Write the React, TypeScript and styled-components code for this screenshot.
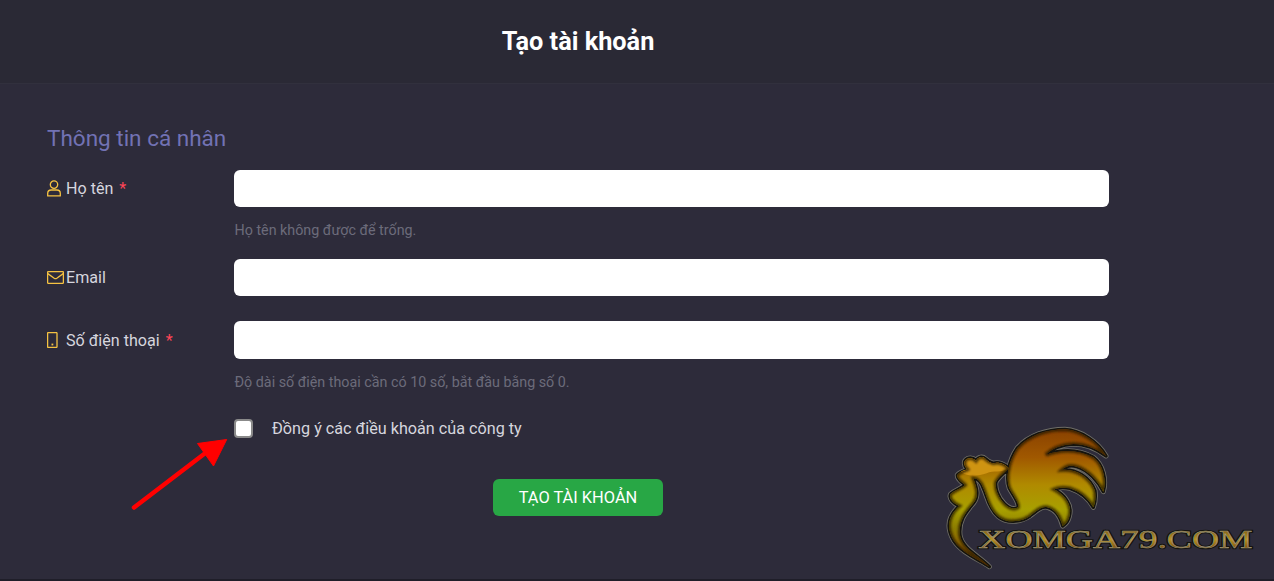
import React from "react";
import styled, { createGlobalStyle } from "styled-components";

const Global = createGlobalStyle`
  html, body { margin: 0; padding: 0; background: #2d2b3a; }
  body { font-family: Roboto, "Liberation Sans", sans-serif; }
  * { box-sizing: border-box; }
`;

const Page = styled.div`
  position: relative;
  width: 1274px;
  height: 581px;
  overflow: hidden;
  background: #2d2b3a;
  border-bottom: 2px solid #1f1e29;
`;

const Header = styled.header`
  height: 84px;
  display: flex;
  align-items: center;
  justify-content: center;
  background: #2a2935;
  border-bottom: 1px solid #31303d;
  padding-right: 118px;
`;

const Title = styled.h1`
  margin: 0;
  font-size: 25.3px;
  font-weight: 700;
  line-height: 28px;
  color: #fff;
`;

const Form = styled.form`
  width: 1156px;
  padding: 39px 47px 0;
`;

const Section = styled.h2`
  margin: 0 0 17px;
  font-size: 22.5px;
  font-weight: 400;
  line-height: 30px;
  color: #7272b4;
`;

const Row = styled.div<{ $gap: number }>`
  display: grid;
  grid-template-columns: 187px 875px;
  margin-bottom: ${(p) => p.$gap}px;
`;

const Label = styled.label<{ $h?: number }>`
  display: flex;
  align-items: center;
  height: ${(p) => p.$h ?? 37}px;
  font-size: 16.1px;
  color: #d6d6de;
`;

const IconSlot = styled.span`
  width: 19px;
  display: flex;
  align-items: center;
  color: #f5c242;
`;

const Star = styled.span`
  color: #ff4557;
  margin-left: 6px;
`;

const Input = styled.input<{ $h?: number }>`
  width: 100%;
  height: ${(p) => p.$h ?? 37}px;
  border: none;
  border-radius: 6px;
  background: #fff;
  display: block;
`;

const Hint = styled.div`
  grid-column: 2;
  margin-top: 14px;
  padding-left: 0.5px;
  font-size: 14.3px;
  line-height: 18px;
  color: #6c6b7a;
`;

const CheckRow = styled.div`
  display: flex;
  align-items: center;
  margin-left: 187px;
  height: 20px;
`;

const Box = styled.span`
  width: 19px;
  height: 19px;
  border: 2px solid #8a8a8a;
  border-radius: 4px;
  background: #fff;
`;

const CheckText = styled.span`
  margin-left: 19px;
  font-size: 16.2px;
  color: #d6d6de;
`;

const Actions = styled.div`
  display: flex;
  justify-content: center;
  margin-top: 41px;
  margin-left: -47px;
  margin-right: -47px;
`;

const Submit = styled.button`
  width: 170px;
  height: 37px;
  border: none;
  border-radius: 6px;
  background: #28a745;
  color: #fff;
  font-family: inherit;
  font-size: 16.4px;
  font-weight: 400;
`;

const Arrow = styled.svg`
  position: absolute;
  left: 125px;
  top: 430px;
`;

const Logo = styled.svg`
  position: absolute;
  left: 930px;
  top: 420px;
`;

const LogoText = styled.text`
  font-family: "Liberation Serif", serif;
  font-size: 78px;
  font-weight: 400;
`;

const rooster =
  "M178 440 C150 420 95 400 70 360 C50 325 52 290 88 258 C70 250 55 235 62 222 C75 210 95 205 105 195 C95 185 80 178 82 165 C90 155 105 152 112 148 C100 135 100 122 112 116 C122 112 132 116 138 122 C145 110 158 108 166 116 C172 122 176 126 190 130 C205 125 225 132 236 145 C222 160 205 172 198 186 C194 205 205 232 222 250 C235 264 250 270 264 262 C268 248 250 228 238 205 C226 172 236 122 262 84 C296 46 350 28 405 28 C450 30 505 65 528 108 C505 90 470 72 430 72 C395 74 368 84 348 104 C400 86 450 90 490 112 C520 134 530 180 520 215 C505 185 475 150 440 140 C420 134 405 140 395 150 C440 146 480 172 495 212 C498 235 495 250 490 262 C475 235 450 215 420 205 C405 202 385 202 372 208 C405 225 428 255 418 290 C415 302 408 312 398 318 C392 295 378 268 352 262 C335 258 320 272 300 288 C270 308 230 310 205 290 C175 265 170 225 160 205 C155 190 145 175 130 175 C138 200 150 225 130 250 C110 275 85 300 90 345 C95 385 150 410 178 440 Z";

const UserIcon = () => (
  <svg width="15" height="17" viewBox="0 0 15 17" fill="none" stroke="currentColor" strokeWidth="1.3">
    <circle cx="7" cy="4.6" r="3.7" />
    <path d="M0.7 15.9 V13.4 a3.4 3.4 0 0 1 3.4-3.4 h5.8 a3.4 3.4 0 0 1 3.4 3.4 V15.9 Z" strokeLinejoin="round" />
  </svg>
);

const MailIcon = () => (
  <svg width="17" height="13" viewBox="0 0 17 13" fill="none" stroke="currentColor" strokeWidth="1.3">
    <rect x="0.6" y="0.6" width="15.8" height="11.8" rx="0.8" />
    <path d="M0.8 2.6 L7.2 7.2 Q8.5 8 9.8 7.2 L16.2 2.6" />
  </svg>
);

const PhoneIcon = () => (
  <svg width="11" height="16" viewBox="0 0 11 16" fill="none" stroke="currentColor" strokeWidth="1.3">
    <rect x="0.6" y="0.6" width="9.4" height="14.8" rx="0.6" />
    <rect x="4.5" y="11.6" width="1.8" height="1.8" fill="currentColor" stroke="none" />
  </svg>
);

export default function App() {
  return (
    <Page>
      <Global />
      <Header>
        <Title>Tạo tài khoản</Title>
      </Header>
      <Form onSubmit={(e) => e.preventDefault()}>
        <Section>Thông tin cá nhân</Section>
        <Row $gap={20}>
          <Label>
            <IconSlot><UserIcon /></IconSlot>
            Họ tên <Star>*</Star>
          </Label>
          <Input />
          <Hint>Họ tên không được để trống.</Hint>
        </Row>
        <Row $gap={25}>
          <Label>
            <IconSlot><MailIcon /></IconSlot>
            Email
          </Label>
          <Input />
        </Row>
        <Row $gap={27}>
          <Label $h={38}>
            <IconSlot><PhoneIcon /></IconSlot>
            Số điện thoại <Star>*</Star>
          </Label>
          <Input $h={38} />
          <Hint>Độ dài số điện thoại cần có 10 số, bắt đầu bằng số 0.</Hint>
        </Row>
        <CheckRow>
          <Box />
          <CheckText>Đồng ý các điều khoản của công ty</CheckText>
        </CheckRow>
        <Actions>
          <Submit>TẠO TÀI KHOẢN</Submit>
        </Actions>
      </Form>
      <Arrow width="110" height="85" viewBox="125 430 110 85">
        <path d="M134 507.5 L208 451" stroke="#ff0000" strokeWidth="4.5" strokeLinecap="round" />
        <path d="M226.7 439.5 L197.5 443.5 L213.5 466 Z" fill="#ff0000" stroke="#ff0000" strokeWidth="1" strokeLinejoin="round" />
      </Arrow>
      <Logo width="344" height="161" viewBox="0 0 1032 483">
        <defs>
          <linearGradient id="birdFill" gradientUnits="userSpaceOnUse" x1="0" y1="30" x2="0" y2="440">
            <stop offset="0" stopColor="#8a4200" />
            <stop offset="0.2" stopColor="#a05800" />
            <stop offset="0.4" stopColor="#b08a00" />
            <stop offset="0.58" stopColor="#a8a000" />
            <stop offset="0.72" stopColor="#8c7c00" />
            <stop offset="1" stopColor="#9a4c00" />
          </linearGradient>
          <linearGradient id="textFill" gradientUnits="userSpaceOnUse" x1="0" y1="328" x2="0" y2="388">
            <stop offset="0" stopColor="#7c5a14" />
            <stop offset="0.5" stopColor="#b89425" />
            <stop offset="1" stopColor="#7a4a0a" />
          </linearGradient>
          <clipPath id="birdClip">
            <path d={rooster} />
          </clipPath>
          <filter id="soft" x="-10%" y="-10%" width="120%" height="120%">
            <feGaussianBlur stdDeviation="3.5" />
          </filter>
        </defs>
        <path d={rooster} fill="none" stroke="#6f6e68" strokeWidth="15" strokeLinejoin="round" />
        <path d={rooster} fill="none" stroke="#15130d" strokeWidth="10" strokeLinejoin="round" />
        <path d={rooster} fill="url(#birdFill)" />
        <path d="M92 156 C100 150 108 150 112 148 C100 135 100 122 112 116 C122 112 132 116 138 122 C145 110 158 108 166 116 C172 122 176 126 190 130 C205 125 225 132 236 145 C215 160 190 150 170 160 C140 170 115 170 92 156 Z" fill="#cf9412" />
        <g clipPath="url(#birdClip)">
          <path d={rooster} fill="none" stroke="#2a1c00" strokeWidth="11" filter="url(#soft)" opacity="0.8" />
        </g>
        <LogoText x="145" y="384" textLength="822" lengthAdjust="spacingAndGlyphs" fill="#15130d" stroke="#15130d" strokeWidth="8">XOMGA79.COM</LogoText>
        <LogoText x="145" y="384" textLength="822" lengthAdjust="spacingAndGlyphs" fill="url(#textFill)" stroke="#9a9a88" strokeWidth="1.5">XOMGA79.COM</LogoText>
      </Logo>
    </Page>
  );
}
